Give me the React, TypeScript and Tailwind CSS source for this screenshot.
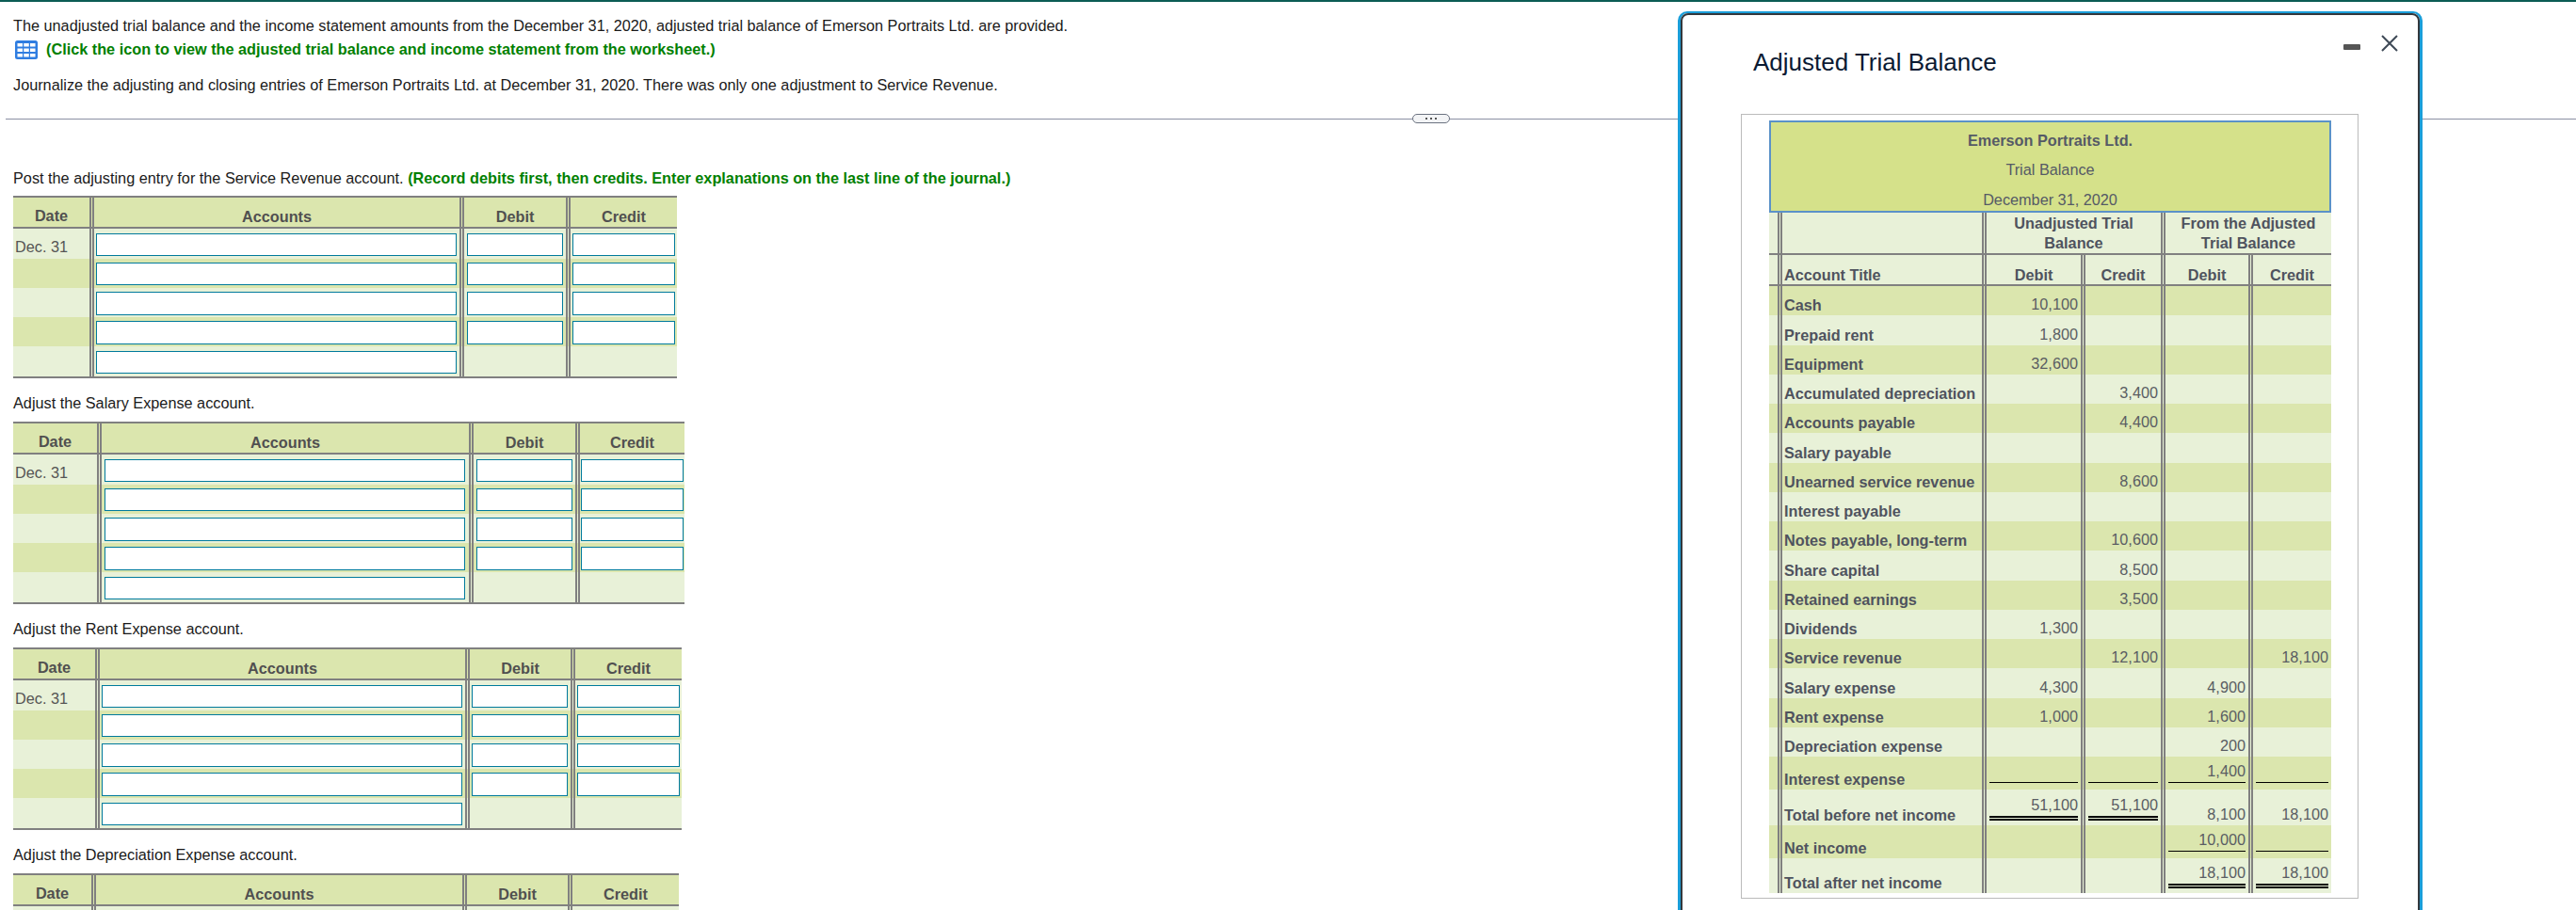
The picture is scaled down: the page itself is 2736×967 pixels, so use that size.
import React from 'react';

type Line = 'none' | 'single' | 'double';
interface Amount { v: string; line?: Line }

const DIVIDER = 'border-l-[5px] border-double border-[#808080]';

// Input rows of a journal table, heights read off the screenshot
const journalRows = [
  { row: 'h-[32px] bg-[#e8f1d8]', pad: 'pt-[5px]', input: 'h-[24px]' },
  { row: 'h-[31px] bg-[#dbe6ae]', pad: 'pt-[4px]', input: 'h-[24px]' },
  { row: 'h-[31px] bg-[#e8f1d8]', pad: 'pt-[4px]', input: 'h-[25px]' },
  { row: 'h-[31px] bg-[#dbe6ae]', pad: 'pt-[4px]', input: 'h-[25px]' },
  { row: 'h-[32px] bg-[#e8f1d8]', pad: 'pt-[5px]', input: 'h-[24px]' },
];

const trialRows: { label: string; h: string; cells: (Amount | null)[] }[] = [
  { label: 'Cash', h: 'h-[31px]', cells: [{ v: '10,100' }, null, null, null] },
  { label: 'Prepaid rent', h: 'h-[32px]', cells: [{ v: '1,800' }, null, null, null] },
  { label: 'Equipment', h: 'h-[31px]', cells: [{ v: '32,600' }, null, null, null] },
  { label: 'Accumulated depreciation', h: 'h-[31px]', cells: [null, { v: '3,400' }, null, null] },
  { label: 'Accounts payable', h: 'h-[31px]', cells: [null, { v: '4,400' }, null, null] },
  { label: 'Salary payable', h: 'h-[32px]', cells: [null, null, null, null] },
  { label: 'Unearned service revenue', h: 'h-[31px]', cells: [null, { v: '8,600' }, null, null] },
  { label: 'Interest payable', h: 'h-[31px]', cells: [null, null, null, null] },
  { label: 'Notes payable, long-term', h: 'h-[31px]', cells: [null, { v: '10,600' }, null, null] },
  { label: 'Share capital', h: 'h-[32px]', cells: [null, { v: '8,500' }, null, null] },
  { label: 'Retained earnings', h: 'h-[31px]', cells: [null, { v: '3,500' }, null, null] },
  { label: 'Dividends', h: 'h-[31px]', cells: [{ v: '1,300' }, null, null, null] },
  { label: 'Service revenue', h: 'h-[31px]', cells: [null, { v: '12,100' }, null, { v: '18,100' }] },
  { label: 'Salary expense', h: 'h-[32px]', cells: [{ v: '4,300' }, null, { v: '4,900' }, null] },
  { label: 'Rent expense', h: 'h-[31px]', cells: [{ v: '1,000' }, null, { v: '1,600' }, null] },
  { label: 'Depreciation expense', h: 'h-[31px]', cells: [null, null, { v: '200' }, null] },
  {
    label: 'Interest expense',
    h: 'h-[35px]',
    cells: [{ v: '', line: 'single' }, { v: '', line: 'single' }, { v: '1,400', line: 'single' }, { v: '', line: 'single' }],
  },
  {
    label: 'Total before net income',
    h: 'h-[38px]',
    cells: [{ v: '51,100', line: 'double' }, { v: '51,100', line: 'double' }, { v: '8,100' }, { v: '18,100' }],
  },
  {
    label: 'Net income',
    h: 'h-[35px]',
    cells: [null, null, { v: '10,000', line: 'single' }, { v: '', line: 'single' }],
  },
  {
    label: 'Total after net income',
    h: 'h-[37px]',
    cells: [null, null, { v: '18,100', line: 'double' }, { v: '18,100', line: 'double' }],
  },
];

const TRIAL_COLS = 'grid-cols-[9px_217px_105px_85px_93px_88px]';

const GridIcon = () => (
  <svg width="24" height="20" viewBox="0 0 24 20" className="shrink-0">
    <rect width="24" height="20" rx="2.5" fill="#2f7de1" />
    {[3, 8.5, 14].map((y) =>
      [2.5, 9.25, 16].map((x) => <rect key={`${x}-${y}`} x={x} y={y} width="5.5" height="3.5" fill="#fff" />)
    )}
  </svg>
);

const JournalTable = ({ cols, date = 'Dec. 31' }: { cols: string; date?: string }) => (
  <div className="w-max border-b-2 border-[#808080]">
    <div className={`grid h-[35px] border-y-2 border-[#808080] bg-[#dbe6ae] font-bold text-[#505050] ${cols}`}>
      <div className="flex items-end justify-center pb-[3px]">Date</div>
      <div className={`flex items-end justify-center pb-[2px] ${DIVIDER}`}>Accounts</div>
      <div className={`flex items-end justify-center pb-[2px] ${DIVIDER}`}>Debit</div>
      <div className={`flex items-end justify-center pb-[2px] ${DIVIDER}`}>Credit</div>
    </div>
    {journalRows.map((r, i) => (
      <div key={i} className={`grid ${cols} ${r.row}`}>
        <div className="pl-[2px] pt-[10px] text-[#555]">{i === 0 ? date : ''}</div>
        <div className={`flex justify-center pr-[1px] ${DIVIDER} ${r.pad}`}>
          <input className={`w-[383px] border border-[#007a9c] bg-white ${r.input}`} />
        </div>
        <div className={`flex justify-center pr-[1px] ${DIVIDER} ${r.pad}`}>
          {i < 4 && <input className={`w-[102px] border border-[#007a9c] bg-white ${r.input}`} />}
        </div>
        <div className={`flex justify-center pr-[1px] ${DIVIDER} ${r.pad}`}>
          {i < 4 && <input className={`w-[109px] border border-[#007a9c] bg-white ${r.input}`} />}
        </div>
      </div>
    ))}
  </div>
);

const AmountCell = ({ cell }: { cell: Amount | null }) => {
  const line = cell?.line ?? 'none';
  return (
    <div className={`flex flex-col justify-end text-right text-[#5a5d63] ${DIVIDER}`}>
      {cell && line === 'none' && <div className="mb-[3px] mr-[3px]">{cell.v}</div>}
      {cell && line === 'single' && (
        <div className="mx-[3px] mb-[7px] min-h-[22px] border-b border-black pb-[3px]">{cell.v}</div>
      )}
      {cell && line === 'double' && (
        <div className="mx-[3px] mb-[5px] border-b-[5px] border-double border-black pb-[3px]">{cell.v}</div>
      )}
    </div>
  );
};

const TrialBalance = () => (
  <div className="w-[597px]">
    <div className="flex h-[98px] flex-col items-center border-2 border-[#5b92c8] bg-[#d5e18a] pt-[10px] text-[#555a66]">
      <div className="font-bold">Emerson Portraits Ltd.</div>
      <div className="mt-[13px]">Trial Balance</div>
      <div className="mt-[14px]">December 31, 2020</div>
    </div>
    <div className={`grid h-[45px] border-b-2 border-[#808080] bg-[#e8f1d8] font-bold leading-[21px] text-[#4f535e] ${TRIAL_COLS}`}>
      <div />
      <div className={DIVIDER} />
      <div className={`col-span-2 pt-[1px] text-center ${DIVIDER}`}>
        Unadjusted Trial
        <br />
        Balance
      </div>
      <div className={`col-span-2 pt-[1px] text-center ${DIVIDER}`}>
        From the Adjusted
        <br />
        Trial Balance
      </div>
    </div>
    <div className={`grid h-[33px] border-b-2 border-[#808080] bg-[#e8f1d8] font-bold text-[#4f535e] ${TRIAL_COLS}`}>
      <div />
      <div className={`flex items-end pb-[1px] pl-[2px] ${DIVIDER}`}>Account Title</div>
      {['Debit', 'Credit', 'Debit', 'Credit'].map((h, i) => (
        <div key={i} className={`flex items-end justify-center pb-[1px] ${DIVIDER}`}>
          {h}
        </div>
      ))}
    </div>
    {trialRows.map((r, i) => (
      <div key={r.label} className={`grid ${TRIAL_COLS} ${r.h} ${i % 2 === 0 ? 'bg-[#dbe6ae]' : 'bg-[#e8f1d8]'}`}>
        <div />
        <div className={`flex items-end pb-[2px] pl-[2px] font-bold text-[#4f535e] ${DIVIDER}`}>{r.label}</div>
        {r.cells.map((c, j) => (
          <AmountCell key={j} cell={c} />
        ))}
      </div>
    ))}
  </div>
);

const TrialBalanceModal = () => (
  <div className="absolute left-[1782px] top-[12px] h-[1000px] w-[791px] rounded-[10px] border-x-[3px] border-y-2 border-[#1a9ed9] bg-white">
    <div className="h-full rounded-[8px] border-2 border-[#33383d]">
      <div className="flex h-[105px] justify-between">
        <h2 className="ml-[75px] mt-[35px] text-[26px] leading-[30px] text-[#0b1a33]">Adjusted Trial Balance</h2>
        <div className="mr-[21px] mt-[21px] flex items-start gap-[22px]">
          <div className="mt-[10px] h-[6px] w-[18px] rounded-[1px] bg-[#555]" />
          <svg width="18" height="18" viewBox="0 0 18 18" stroke="#3f4a57" strokeWidth="2">
            <path d="M1 1 L17 17 M17 1 L1 17" />
          </svg>
        </div>
      </div>
      <div className="ml-[62px] h-[834px] w-[656px] border border-[#bbb] pl-[29px] pt-[6px]">
        <TrialBalance />
      </div>
    </div>
  </div>
);

export default function App() {
  return (
    <div className="relative h-[967px] w-[2736px] overflow-hidden bg-white font-['Liberation_Sans',Arial,sans-serif] text-[16.25px] leading-[18px] text-[#1a1a1a]">
      <div className="h-[2px] bg-[#0b5c55]" />
      <div className="px-[14px]">
        <p className="mt-[16px]">
          The unadjusted trial balance and the income statement amounts from the December 31, 2020, adjusted trial balance of Emerson Portraits Ltd. are provided.
        </p>
        <div className="mt-[7px] flex h-[20px] items-start">
          <span className="ml-[2px]">
            <GridIcon />
          </span>
          <span className="ml-[9px] font-bold text-[#008000]">
            (Click the icon to view the adjusted trial balance and income statement from the worksheet.)
          </span>
        </div>
        <p className="mt-[18px]">
          Journalize the adjusting and closing entries of Emerson Portraits Ltd. at December 31, 2020. There was only one adjustment to Service Revenue.
        </p>
      </div>

      <div className="relative ml-[6px] mt-[27px] h-[1px] bg-[#8b8fa3]">
        <div className="absolute left-[1494px] top-[-5px] flex h-[10px] w-[40px] items-center justify-center gap-[3px] rounded-full border border-[#6b7280] bg-[#f3f4f6]">
          <span className="h-[2px] w-[2px] bg-[#555]" />
          <span className="h-[2px] w-[2px] bg-[#555]" />
          <span className="h-[2px] w-[2px] bg-[#555]" />
        </div>
      </div>

      <div className="px-[14px]">
        <p className="mt-[53px]">
          Post the adjusting entry for the Service Revenue account.{' '}
          <span className="font-bold text-[#008000]">
            (Record debits first, then credits. Enter explanations on the last line of the journal.)
          </span>
        </p>
        <div className="mt-[10px]">
          <JournalTable cols="grid-cols-[81px_393px_113px_118px]" />
        </div>
        <p className="mt-[17px]">Adjust the Salary Expense account.</p>
        <div className="mt-[11px]">
          <JournalTable cols="grid-cols-[89px_395px_113px_116px]" />
        </div>
        <p className="mt-[17px]">Adjust the Rent Expense account.</p>
        <div className="mt-[11px]">
          <JournalTable cols="grid-cols-[87px_393px_112px_118px]" />
        </div>
        <p className="mt-[17px]">Adjust the Depreciation Expense account.</p>
        <div className="mt-[11px]">
          {/* first row falls below the fold, so no date label here */}
          <JournalTable cols="grid-cols-[83px_394px_112px_118px]" date="" />
        </div>
      </div>

      <TrialBalanceModal />
    </div>
  );
}
